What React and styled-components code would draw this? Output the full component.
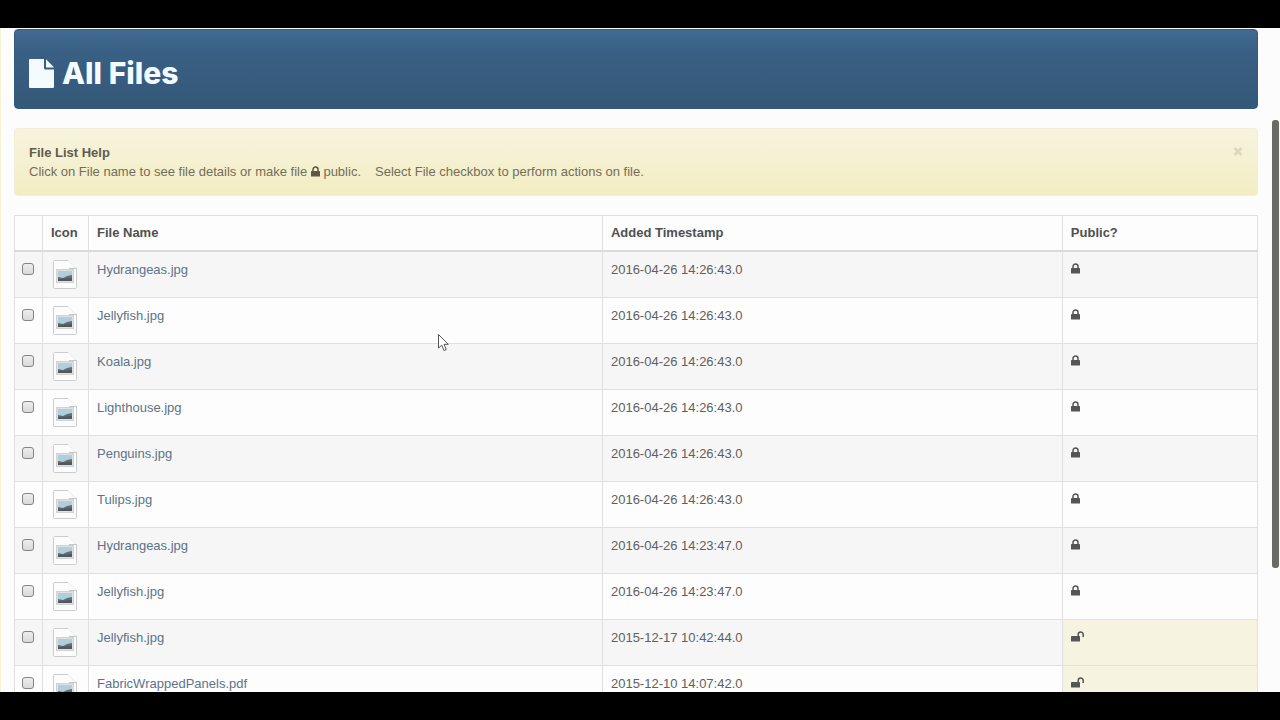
import React from 'react';
import styled, { createGlobalStyle } from 'styled-components';

const GlobalStyle = createGlobalStyle`
    * {
        box-sizing: border-box;
    }
    body {
        margin: 0;
        background: #000;
        color: #606060;
        font-family: 'Liberation Sans', Arial, sans-serif;
        font-size: 13px;
        line-height: 19px;
    }
`

const Screen = styled.div`
    height: 100vh;
    padding: 28px 0;
    position: relative;
`

const Page = styled.main`
    height: 100%;
    overflow: hidden;
    position: relative;
    padding: 1px 22px 0 13px;
    background: #fdfcfd;
    border-left: 1px solid #f3f3d2;
`

const Banner = styled.header`
    display: flex;
    align-items: center;
    gap: 8px;
    padding: 25px 14px 17px;
    color: #f4fbff;
    border-radius: 4px;
    border: 1px solid #34597a;
    background: linear-gradient(#426b93, #395f84 30%, #345877);
`

const Title = styled.h1`
    margin: 0;
    font-family: Inter, 'Open Sans', sans-serif;
    font-size: 30px;
    line-height: 36px;
    font-weight: 800;
`

const Help = styled.section`
    display: flex;
    align-items: flex-start;
    justify-content: space-between;
    margin-top: 19px;
    padding: 14px;
    min-height: 68px;
    color: #746d5a;
    border: 1px solid #f2efd6;
    border-radius: 4px;
    background: linear-gradient(#f7f4df, #f2edc2);
`

const HelpTitle = styled.strong`
    display: block;
    color: #625c4b;
`

const HelpText = styled.p`
    margin: 0;
`

const Hint = styled.span`
    margin-left: 14px;
`

const Close = styled.button`
    display: flex;
    padding: 4px 0;
    color: #dcd8c0;
    border: 0;
    background: none;
    cursor: pointer;
`

const Table = styled.table`
    width: 100%;
    margin-top: 19px;
    table-layout: fixed;
    border-collapse: collapse;
    background: #fdfdfd;
`

const Col = styled.col`
    width: ${props => props.$width};
`

const Th = styled.th`
    padding: 8px;
    border: 1px solid #e0e0e0;
    border-bottom: 2px solid #dadada;
    color: #505050;
    line-height: 18px;
    text-align: left;
    white-space: nowrap;
`

const Row = styled.tr`
    height: 46px;

    &:nth-child(odd) {
        background: #f6f6f6;
    }
`

const Td = styled.td`
    padding: 8px;
    border: 1px solid #e0e0e0;
    vertical-align: top;
    background: ${props => props.$open ? '#f6f4e0' : 'transparent'};
`

const CheckCell = styled(Td)`
    padding: 8px 7px;
`

const IconCell = styled(Td)`
    padding: 7px 9px;
`

const Check = styled.input`
    appearance: none;
    display: block;
    width: 12px;
    height: 12px;
    margin: 3px 0 0;
    border: 1px solid #858585;
    border-radius: 3px;
    background: linear-gradient(#eee, #d9d9d9);

    &:checked {
        background: #6c8297;
    }
`

const FileLink = styled.a`
    color: #5d7389;
    text-decoration: none;
`

const Glyph = styled.svg`
    display: inline-block;
    vertical-align: baseline;
    color: #555;
`

const HelpGlyph = styled.span`
    svg {
        color: #5f5644;
        vertical-align: -1px;
    }
`

const Thumb = styled.svg`
    display: block;
`

const ScrollThumb = styled.div`
    position: absolute;
    top: 92px;
    right: 1px;
    width: 7px;
    height: 448px;
    border-radius: 3px;
    background: #6a6b67;
`

const Pointer = styled.svg`
    position: absolute;
    left: 437px;
    top: 333px;
`

const files = [
    { name: 'Hydrangeas.jpg', added: '2016-04-26 14:26:43.0' },
    { name: 'Jellyfish.jpg', added: '2016-04-26 14:26:43.0' },
    { name: 'Koala.jpg', added: '2016-04-26 14:26:43.0' },
    { name: 'Lighthouse.jpg', added: '2016-04-26 14:26:43.0' },
    { name: 'Penguins.jpg', added: '2016-04-26 14:26:43.0' },
    { name: 'Tulips.jpg', added: '2016-04-26 14:26:43.0' },
    { name: 'Hydrangeas.jpg', added: '2016-04-26 14:23:47.0' },
    { name: 'Jellyfish.jpg', added: '2016-04-26 14:23:47.0' },
    { name: 'Jellyfish.jpg', added: '2015-12-17 10:42:44.0', open: true },
    { name: 'FabricWrappedPanels.pdf', added: '2015-12-10 14:07:42.0', open: true },
]

const Lock = () => (
    <Glyph width="9" height="11" viewBox="0 0 9 11" role="img" aria-label="private">
        <path d="M2 5.500V3.500a2.500 2.500 0 0 1 5 0V5.500" fill="none" stroke="currentColor" strokeWidth="1.500" />
        <rect y="5" width="9" height="5.500" rx="0.6" fill="currentColor" />
    </Glyph>
)

const Unlock = () => (
    <Glyph width="13" height="11" viewBox="0 0 13 11" role="img" aria-label="public">
        <path d="M7.200 5.500V3.500a2.500 2.500 0 0 1 5 0V6" fill="none" stroke="currentColor" strokeWidth="1.500" />
        <rect y="5" width="9" height="5.500" rx="0.6" fill="currentColor" />
    </Glyph>
)

const FileGlyph = () => (
    <svg width="25" height="29" viewBox="0 0 25 29" fill="currentColor" aria-hidden="true">
        <path d="M1 0H15V9q0 1.500 1.500 1.500H25V28q0 1-1 1H1q-1 0-1-1V1q0-1 1-1z" />
        <path d="M17 0.500q.6.200 1 .7l6 6q.5.500.7 1.300H17z" />
    </svg>
)

const ImageFile = () => (
    <Thumb width="26" height="30" viewBox="0 0 26 30" aria-hidden="true">
        <path d="M1.500 1.500H16L24.500 9V29.500H1.500z" fill="#fcfcfc" />
        <path d="M16 1.500H2.500q-1 0-1 1V28.500q0 1 1 1H23.500q1 0 1-1V9.500" fill="none" stroke="#cdcdcd" />
        <path d="M16 1.500L24.500 9.500" fill="none" stroke="#e9e9e9" />
        <path d="M17 9.500H25" fill="none" stroke="#c3c8cb" />
        <rect x="4.500" y="10.500" width="17" height="13" fill="#dce1e3" stroke="#cfd3d5" />
        <rect x="6" y="12" width="14" height="10" fill="#b2cddb" />
        <path d="M6 18l5 1 4-2 5-1v6H6z" fill="#626d75" />
        <path d="M6 20l14-1v3H6z" fill="#54585c" />
    </Thumb>
)

const App = () => {
    return (
        <Screen>
            <GlobalStyle />
            <Page>
                <Banner>
                    <FileGlyph />
                    <Title>All Files</Title>
                </Banner>
                <Help>
                    <div>
                        <HelpTitle>File List Help</HelpTitle>
                        <HelpText>
                            Click on File name to see file details or make file <HelpGlyph><Lock /></HelpGlyph> public.
                            <Hint>Select File checkbox to perform actions on file.</Hint>
                        </HelpText>
                    </div>
                    <Close type="button" aria-label="Close help">
                        <svg width="10" height="9" viewBox="0 0 10 9">
                            <path d="M1.500 1l7 7M8.500 1l-7 7" stroke="currentColor" strokeWidth="2.600" />
                        </svg>
                    </Close>
                </Help>
                <Table>
                    <colgroup>
                        <Col $width="28px" />
                        <Col $width="46px" />
                        <Col />
                        <Col $width="37%" />
                        <Col $width="15.7%" />
                    </colgroup>
                    <thead>
                        <tr>
                            <Th />
                            <Th>Icon</Th>
                            <Th>File Name</Th>
                            <Th>Added Timestamp</Th>
                            <Th>Public?</Th>
                        </tr>
                    </thead>
                    <tbody>
                        {files.map((file, index) => (
                            <Row key={index}>
                                <CheckCell><Check type="checkbox" aria-label={`Select ${file.name}`} /></CheckCell>
                                <IconCell><ImageFile /></IconCell>
                                <Td><FileLink href="#">{file.name}</FileLink></Td>
                                <Td>{file.added}</Td>
                                <Td $open={file.open}>{file.open ? <Unlock /> : <Lock />}</Td>
                            </Row>
                        ))}
                    </tbody>
                </Table>
                <ScrollThumb />
            </Page>
            <Pointer width="13" height="19" viewBox="0 0 13 19">
                <path d="M1.500 1.500V15l3.200-2.800L7 17.500l2.300-1L7 11.300h4.300z" fill="#fff" stroke="#555" />
            </Pointer>
        </Screen>
    )
}

export default App
